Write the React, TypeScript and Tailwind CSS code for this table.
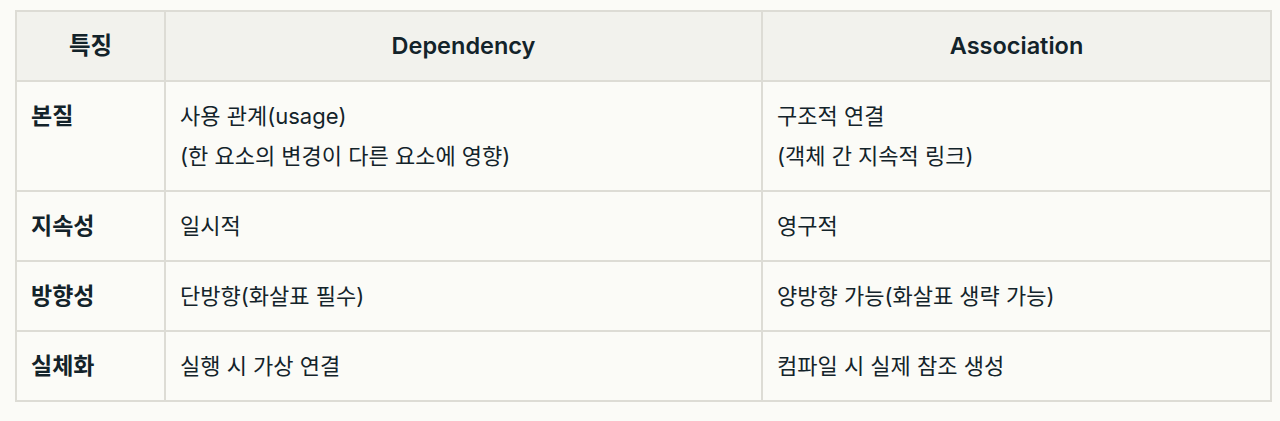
const rows = [
  { label: "본질", dep: ["사용 관계(usage)", "(한 요소의 변경이 다른 요소에 영향)"], assoc: ["구조적 연결", "(객체 간 지속적 링크)"] },
  { label: "지속성", dep: ["일시적"], assoc: ["영구적"] },
  { label: "방향성", dep: ["단방향(화살표 필수)"], assoc: ["양방향 가능(화살표 생략 가능)"] },
  { label: "실체화", dep: ["실행 시 가상 연결"], assoc: ["컴파일 시 실제 참조 생성"] },
];

export default function App() {
  return (
    <div className="min-h-screen bg-[#fbfbf7] pt-[10px] pl-[15px] pr-[8px] text-[22px] leading-[40px] text-[#13232a] font-['Inter','Noto_Sans_CJK_KR',sans-serif]">
      <table className="w-[1257px] border-collapse border-2 border-[#dddcd5] table-fixed">
        <colgroup>
          <col className="w-[149px]" />
          <col className="w-[597px]" />
          <col />
        </colgroup>
        <thead>
          <tr className="bg-[#f2f2ed] text-[23.5px]">
            <th className="h-[70px] border-2 border-[#dddcd5] font-semibold text-center">특징</th>
            <th className="h-[70px] border-2 border-[#dddcd5] font-semibold text-center">Dependency</th>
            <th className="h-[70px] border-2 border-[#dddcd5] font-semibold text-center">Association</th>
          </tr>
        </thead>
        <tbody>
          {rows.map((r) => (
            <tr key={r.label}>
              <td className="border-2 border-[#dddcd5] px-[14px] py-[14px] align-top text-[23px] font-bold">{r.label}</td>
              <td className="border-2 border-[#dddcd5] px-[14px] py-[14px] align-top">
                {r.dep.map((line) => (
                  <div key={line}>{line}</div>
                ))}
              </td>
              <td className="border-2 border-[#dddcd5] px-[14px] py-[14px] align-top">
                {r.assoc.map((line) => (
                  <div key={line}>{line}</div>
                ))}
              </td>
            </tr>
          ))}
        </tbody>
      </table>
    </div>
  );
}
